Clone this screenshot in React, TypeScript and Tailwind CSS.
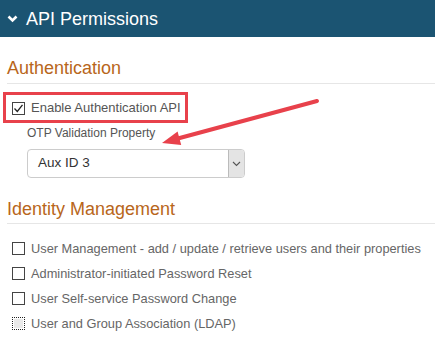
import React from "react";

function Box({ checked = false, focus = false }: { checked?: boolean; focus?: boolean }) {
  if (focus) {
    return (
      <span className="flex h-[13px] w-[13px] shrink-0 items-center justify-center border border-dotted border-[#222] bg-white">
        <span className="h-[9px] w-[9px] bg-[#e9e9e9]" />
      </span>
    );
  }
  return (
    <span className="flex h-[13px] w-[13px] shrink-0 items-center justify-center border border-[#444] bg-white">
      {checked && (
        <svg width="11" height="11" viewBox="0 0 11 11">
          <polyline points="1.5,5.5 4.3,8.5 9.5,1.8" fill="none" stroke="#222" strokeWidth="1.3" />
        </svg>
      )}
    </span>
  );
}

const items = [
  "User Management - add / update / retrieve users and their properties",
  "Administrator-initiated Password Reset",
  "User Self-service Password Change",
  "User and Group Association (LDAP)",
];

export default function App() {
  return (
    <div
      className="relative h-[348px] w-[435px] overflow-hidden bg-white"
      style={{ fontFamily: '"Liberation Sans", Arial, sans-serif' }}
    >
      <div className="flex h-[37px] items-center bg-[#1b5472] pl-[7px]">
        <svg width="11" height="8" viewBox="0 0 11 8" className="mt-[1px]">
          <polyline points="1.5,1.5 5.5,5.5 9.5,1.5" fill="none" stroke="#fff" strokeWidth="2.6" />
        </svg>
        <span className="ml-[8px] text-[18px] leading-[20px] text-white">API Permissions</span>
      </div>

      <div className="pl-[7px]">
        <div className="mt-[21px] border-b border-[#e6e6e6] pb-[5px] text-[18px] leading-[20px] text-[#b8661b]">
          Authentication
        </div>

        <div className="mt-[14px] flex h-[20px] items-center pl-[5px]">
          <Box checked />
          <span className="ml-[6px] text-[13px] text-[#555]">Enable Authentication API</span>
        </div>

        <div className="mt-[8px] pl-[20px] text-[12px] leading-[14px] text-[#555]">OTP Validation Property</div>

        <div className="ml-[20px] mt-[9px] flex h-[29px] w-[218px] overflow-hidden rounded-[4px] border border-[#cccccc]">
          <div className="flex flex-1 items-center pl-[10px] text-[13.5px] text-[#333]">Aux ID 3</div>
          <div className="flex w-[16px] items-center justify-center border-l border-[#bbbbbb] bg-[#e4e4e4]">
            <svg width="9" height="6" viewBox="0 0 9 6">
              <polyline points="1,1 4.5,4.5 8,1" fill="none" stroke="#555" strokeWidth="1.1" />
            </svg>
          </div>
        </div>

        <div className="mt-[21px] border-b border-[#e6e6e6] pb-[4px] text-[18px] leading-[20px] text-[#b8661b]">
          Identity Management
        </div>

        <div className="mt-[12px] flex flex-col">
          {items.map((t, i) => (
            <div key={t} className="flex h-[25px] items-center pl-[5px]">
              <Box focus={i === 3} />
              <span className="ml-[6px] whitespace-nowrap text-[12.8px] text-[#666]">{t}</span>
            </div>
          ))}
        </div>
      </div>

      <div className="absolute left-[3px] top-[92px] h-[31px] w-[185px] border-[3px] border-[#e8414b]" />

      <svg className="pointer-events-none absolute left-0 top-0" width="435" height="348" viewBox="0 0 435 348">
        <line x1="317" y1="101" x2="176" y2="139" stroke="#e8414b" strokeWidth="4" strokeLinecap="round" />
        <polygon points="162,143 177.6,131.5 181.2,145.1" fill="#e8414b" />
      </svg>
    </div>
  );
}
